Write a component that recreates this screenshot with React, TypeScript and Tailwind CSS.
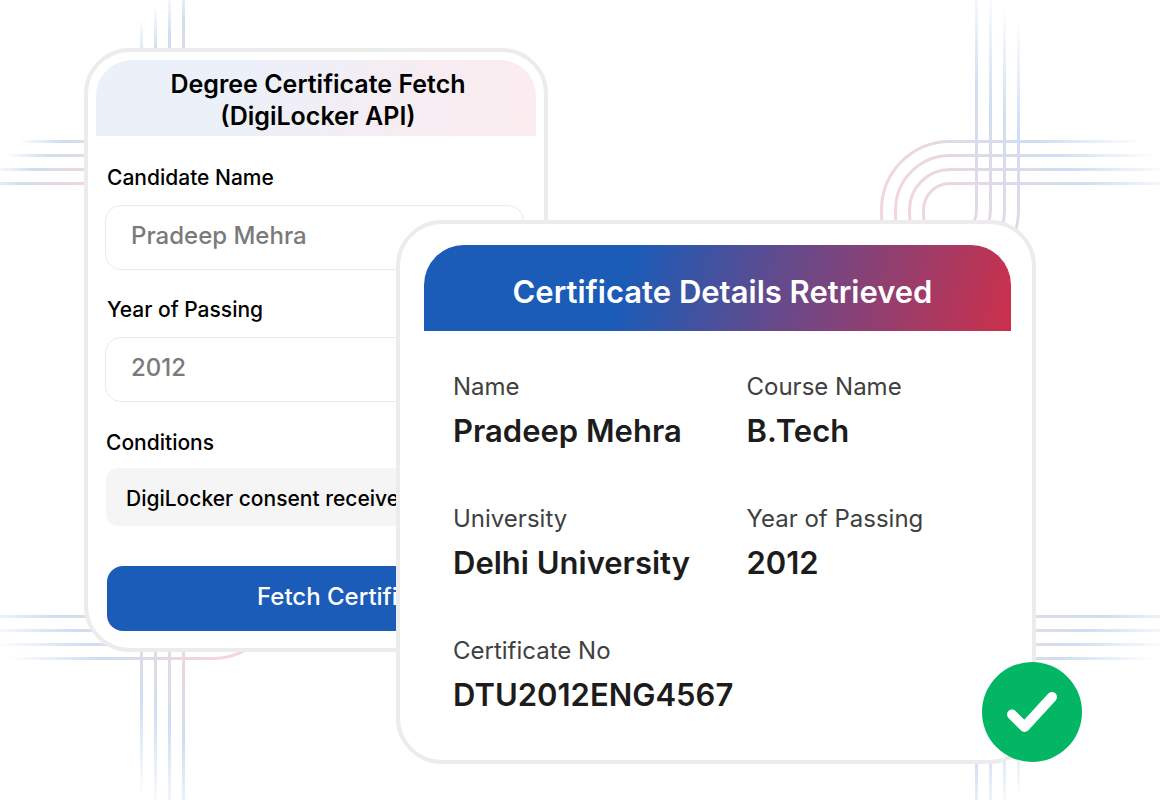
import React from "react";

const BLUE = "#cfdef2";
const PINK = "#f4d5dc";

type Line = {
  d: string;
  /** gradient axis: clear end, then the coloured end */
  axis: [number, number, number, number];
  /** share of the axis at which the line is fully blue */
  peak: number;
};

const offsets = [0, 14, 28, 42];

const lines: Line[] = [
  // left edge, upper band
  ...offsets.map((o): Line => ({
    d: `M-40 ${141.5 + o}H110`,
    axis: [18 - o, 0, 122 - o, 0],
    peak: 0.42,
  })),
  // top edge, left band
  ...offsets.map((o): Line => ({
    d: `M${141.5 + o} -40V70`,
    axis: [0, 18 - o, 0, 140 - o],
    peak: 0.37,
  })),
  // right edge, upper band, turning down behind the card
  ...offsets.map((o): Line => ({
    d: `M1160 ${141.5 + o}H950A${68.5 - o} ${68.5 - o} 0 0 0 ${881.5 + o} 210V214A${68.5 - o} ${68.5 - o} 0 0 0 950 ${282.5 - o}`,
    axis: [1145 + o, 0, 865 + o, 0],
    peak: 0.37,
  })),
  // top edge, right band, turning left behind the card
  ...offsets.map((o): Line => ({
    d: `M${976.5 + o} 0V210A${26.5 + o} ${26.5 + o} 0 0 1 950 ${236.5 + o}`,
    axis: [0, -24 + o, 0, 300 + o],
    peak: 0.35,
  })),
  // left edge, lower band, turning up behind the card
  ...offsets.map((o): Line => ({
    d: `M0 ${616.5 + o}H212A${26.5 + o} ${26.5 + o} 0 0 0 ${238.5 + o} 590`,
    axis: [-35 + o, 0, 176 + o, 0],
    peak: 0.43,
  })),
  // bottom edge, left band
  ...offsets.map((o): Line => ({
    d: `M${141.5 + o} 800V630`,
    axis: [0, 799 + o, 0, 598 + o],
    peak: 0.5,
  })),
  // right edge, lower band
  ...offsets.map((o): Line => ({
    d: `M1160 ${616.5 + o}H1000`,
    axis: [1197 - o, 0, 980 - o, 0],
    peak: 0.43,
  })),
  // bottom edge, right band
  ...offsets.map((o): Line => ({
    d: `M${976.5 + o} 800V740`,
    axis: [0, 841 - o, 0, 640 - o],
    peak: 0.4,
  })),
];

function Backdrop() {
  return (
    <svg
      aria-hidden="true"
      className="pointer-events-none absolute left-0 top-0"
      width="1160"
      height="800"
      viewBox="0 0 1160 800"
      fill="none"
    >
      <defs>
        {lines.map((l, i) => (
          <linearGradient
            key={i}
            id={`line-${i}`}
            gradientUnits="userSpaceOnUse"
            x1={l.axis[0]}
            y1={l.axis[1]}
            x2={l.axis[2]}
            y2={l.axis[3]}
          >
            <stop offset="0" stopColor={BLUE} stopOpacity="0" />
            <stop offset={l.peak} stopColor={BLUE} />
            <stop offset="1" stopColor={PINK} />
          </linearGradient>
        ))}
      </defs>
      {lines.map((l, i) => (
        <path key={i} d={l.d} stroke={`url(#line-${i})`} strokeWidth="3" />
      ))}
    </svg>
  );
}

function Field({ id, label, value }: { id: string; label: string; value: string }) {
  return (
    <div className="mb-[25px] flex flex-col gap-3">
      <label htmlFor={id} className="pl-[2px] text-[21px] leading-[30px] font-medium">
        {label}
      </label>
      <input
        id={id}
        type="text"
        defaultValue={value}
        className="h-[65px] w-full rounded-2xl border border-[#ebebeb] bg-white px-[25px] pb-1 text-2xl font-medium text-[#7a7a7a] outline-none"
      />
    </div>
  );
}

function FetchCard() {
  return (
    <section className="w-[464px] shrink-0 rounded-[46px] border-4 border-[#ececec] bg-white px-2 pt-2 pb-[17px]">
      <h1 className="rounded-t-[36px] bg-[linear-gradient(106deg,#ebf0f9_32%,#f6edf3_68%,#fbecef)] pt-2 pr-3 pb-1 pl-4 text-center text-[25px] leading-8 font-semibold">
        Degree Certificate Fetch
        <br />
        (DigiLocker API)
      </h1>
      <form className="pt-[27px] pr-3 pl-[9px]" onSubmit={(e) => e.preventDefault()}>
        <Field id="candidate" label="Candidate Name" value="Pradeep Mehra" />
        <Field id="year" label="Year of Passing" value="2012" />
        <h2 className="pt-px pl-px text-[21px] leading-[30px] font-medium">Conditions</h2>
        <p className="mt-[10px] ml-px rounded-xl bg-[#f5f5f5] px-5 pt-4 pb-3 text-[21px] leading-[30px] font-medium">
          DigiLocker consent received
        </p>
        <div className="mt-10 pl-[2px]">
          <button
            type="submit"
            className="h-[65px] w-full rounded-2xl bg-[#1a5cb8] pb-1 pl-[150px] text-left text-2xl font-medium text-white"
          >
            Fetch Certificate
          </button>
        </div>
      </form>
    </section>
  );
}

const details = [
  ["Name", "Pradeep Mehra"],
  ["Course Name", "B.Tech"],
  ["University", "Delhi University"],
  ["Year of Passing", "2012"],
  ["Certificate No", "DTU2012ENG4567"],
];

function DetailsCard() {
  return (
    <section className="relative -ml-[152px] mt-[172px] max-w-[640px] min-w-0 flex-1 rounded-[46px] border-4 border-[#ececec] bg-white pt-[21px] pr-[21px] pb-[45px] pl-6">
      <h2 className="rounded-t-[40px] bg-[linear-gradient(106deg,#1a5cb8_34%,#644a8c_60%,#cd304b)] pt-[26px] pr-3 pb-[18px] pl-[22px] text-center text-[31px] leading-[42px] font-semibold text-white">
        Certificate Details Retrieved
      </h2>
      <dl className="-mr-[29px] grid grid-cols-2 gap-y-[52px] pt-10 pl-[29px]">
        {details.map(([label, value]) => (
          <div key={label} className="flex flex-col gap-2 whitespace-nowrap">
            <dt className="text-2xl leading-8 text-[#404040]">{label}</dt>
            <dd className="text-[31px] leading-10 font-semibold text-[#1c1c1c]">{value}</dd>
          </div>
        ))}
      </dl>
      <svg
        role="img"
        aria-label="Verified"
        className="absolute -right-[50px] -bottom-[2px] size-[100px]"
        viewBox="0 0 100 100"
        fill="none"
      >
        <circle cx="50" cy="50" r="50" fill="#02b663" />
        <path
          d="M30 52.5L42.5 65L70 35"
          stroke="#fff"
          strokeWidth="10"
          strokeLinecap="round"
          strokeLinejoin="round"
        />
      </svg>
    </section>
  );
}

export default function App() {
  return (
    <main className="relative min-h-screen overflow-hidden bg-white font-['Inter','Liberation_Sans',sans-serif] text-black">
      <Backdrop />
      <div className="relative flex items-start pt-12 pr-20 pl-[84px]">
        <FetchCard />
        <DetailsCard />
      </div>
    </main>
  );
}
